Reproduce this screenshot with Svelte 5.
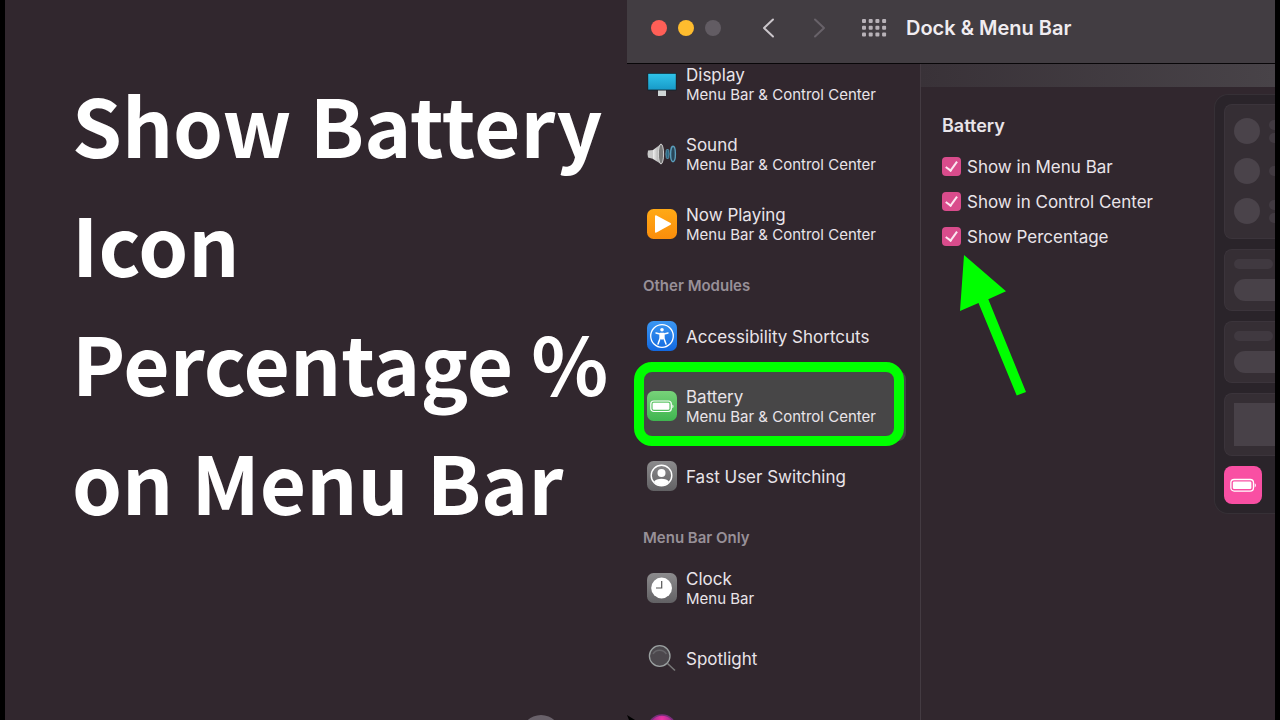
<script>
  const sections = [
    {
      items: [
        { icon: "display", name: "Display", where: "Menu Bar & Control Center" },
        { icon: "sound", name: "Sound", where: "Menu Bar & Control Center" },
        { icon: "play", name: "Now Playing", where: "Menu Bar & Control Center" },
      ],
    },
    {
      title: "Other Modules",
      items: [
        { icon: "access", name: "Accessibility Shortcuts" },
        { icon: "battery", name: "Battery", where: "Menu Bar & Control Center" },
        { icon: "user", name: "Fast User Switching" },
      ],
    },
    {
      title: "Menu Bar Only",
      items: [
        { icon: "clock", name: "Clock", where: "Menu Bar" },
        { icon: "spotlight", name: "Spotlight" },
        { icon: "siri", name: "" },
      ],
    },
  ];

  let selected = $state("battery");
  let options = $state([
    { label: "Show in Menu Bar", on: true },
    { label: "Show in Control Center", on: true },
    { label: "Show Percentage", on: true },
  ]);
</script>

{#snippet cell()}
  <rect x="6" y="10" width="20.5" height="10.5" rx="3" fill="none" stroke="#fff" stroke-width="1.2" />
  <rect x="7.8" y="11.8" width="16.8" height="6.9" rx="1.2" fill="#fff" />
  <path d="M27.6 13.4v3.8c1.5-.6 1.5-3.2 0-3.8z" fill="#fff" />
{/snippet}

{#snippet glyph(kind)}
  <svg class="icon" viewBox="0 0 30 30" aria-hidden="true">
    {#if kind === "display"}
      <rect x="0.5" y="4" width="29" height="17.5" rx="0.8" fill="#10242d" />
      <rect x="1.2" y="4.8" width="27.6" height="15.8" fill="url(#screen)" />
      <rect x="11" y="21.5" width="8" height="5.5" fill="#cfd6d6" />
    {:else if kind === "sound"}
      <path d="M1 11.5 6.5 11v9L1 18.5Q0 15 1 11.5z" fill="#c9c9c9" />
      <path d="M6 11 14 5v20l-8-5z" fill="url(#cone)" />
      <ellipse cx="14" cy="15" rx="2.6" ry="10" fill="#777" stroke="#ddd" stroke-width="0.9" />
      <ellipse cx="20.5" cy="15" rx="1.6" ry="5" fill="#286581" stroke="#5a91a8" />
      <ellipse cx="26" cy="15" rx="2.4" ry="7.7" fill="#294658" stroke="#5b9fbd" stroke-width="1.4" />
    {:else if kind === "play"}
      <rect width="30" height="30" rx="6.5" fill="url(#orange)" />
      <path d="M8 7.3c0-1 .7-1.3 1.5-.9l14 7.6c.8.5.8 1.2 0 1.7l-14 7.9c-.8.4-1.5 0-1.5-.9z" fill="#fff" />
    {:else if kind === "access"}
      <rect width="30" height="30" rx="6.5" fill="url(#blue)" />
      <circle cx="15" cy="15" r="11.3" fill="none" stroke="#fff" stroke-width="1.3" />
      <circle cx="15" cy="8.8" r="1.8" fill="#fff" />
      <path d="M9 11.9l4.2 1.1v4.1L11 23M21 11.9l-4.2 1.1v4.1L19 23" fill="none" stroke="#fff" stroke-width="1.5" stroke-linecap="round" />
      <path d="M12.7 11.8h4.6v5.7L15 18.8l-2.3-1.3z" fill="#fff" />
    {:else if kind === "battery"}
      <rect width="30" height="30" rx="6.5" fill="url(#green)" />
      <g transform="translate(-2.200 0)">{@render cell()}</g>
    {:else if kind === "user"}
      <rect width="30" height="30" rx="6.5" fill="url(#gray)" />
      <circle cx="14.5" cy="14.5" r="10.3" fill="none" stroke="#fff" stroke-width="1.4" />
      <circle cx="14.5" cy="11.9" r="4" fill="#fff" />
      <path d="M7 20.7c1.8-4 13.2-4 15 0-3.6 4.8-11.4 4.8-15 0z" fill="#fff" />
    {:else if kind === "clock"}
      <rect width="30" height="30" rx="6.5" fill="url(#gray)" />
      <circle cx="14.6" cy="15" r="10.4" fill="#fff" />
      <path d="M14.7 8v7H9" fill="none" stroke="#555" stroke-width="1.2" />
    {:else if kind === "spotlight"}
      <path d="M20.5 20.5l7.500 7" stroke="#777" stroke-width="1.6" />
      <circle cx="12.7" cy="13" r="10.3" fill="#4c484d" stroke="#9ba1a1" stroke-width="1.3" />
      <path d="M6 11c3-5 10-5 13.4 0" fill="none" stroke="#666569" stroke-width="1.4" />
    {:else}
      <circle cx="15" cy="16" r="14" fill="url(#orb)" stroke="#77307b" stroke-width="1.5" />
    {/if}
  </svg>
{/snippet}

<svg class="defs" width="0" height="0" aria-hidden="true">
  <defs>
    <linearGradient id="screen" x2="0" y2="1"><stop stop-color="#2fc3ea" /><stop offset="1" stop-color="#189ac8" /></linearGradient>
    <linearGradient id="cone"><stop stop-color="#eee" /><stop offset="1" stop-color="#999" /></linearGradient>
    <linearGradient id="orange" x2="0" y2="1"><stop stop-color="#ffa915" /><stop offset="1" stop-color="#fb8d0b" /></linearGradient>
    <linearGradient id="blue" x2="0" y2="1"><stop stop-color="#3b97f2" /><stop offset="1" stop-color="#1268e0" /></linearGradient>
    <linearGradient id="green" x2="0" y2="1"><stop stop-color="#77d279" /><stop offset="1" stop-color="#3fb550" /></linearGradient>
    <linearGradient id="gray" x2="0" y2="1"><stop stop-color="#8c8b8d" /><stop offset="1" stop-color="#626164" /></linearGradient>
    <radialGradient id="orb" cy="0.15"><stop stop-color="#ee36a6" /><stop offset="1" stop-color="#872586" /></radialGradient>
  </defs>
</svg>

<main class="stage">
  <section class="hero">
    <h1>Show Battery Icon Percentage % on Menu Bar</h1>
    <span class="knob"></span>
    <svg class="cursor" width="8" height="5" viewBox="0 0 8 5" aria-hidden="true"><path d="M0 0l8 5H2z" /></svg>
  </section>

  <section class="window">
    <header class="toolbar">
      <div class="lights">
        <button class="red" aria-label="Close"></button>
        <button class="yellow" aria-label="Minimize"></button>
        <button aria-label="Zoom" disabled></button>
      </div>
      <div class="arrows">
        <button aria-label="Back">
          <svg width="14" height="20" viewBox="0 0 14 20"><path d="M12 1.5 3 10l9 8.5" /></svg>
        </button>
        <button aria-label="Forward" disabled>
          <svg width="14" height="20" viewBox="0 0 14 20"><path d="M2 1.5 11 10l-9 8.5" /></svg>
        </button>
      </div>
      <button class="all" aria-label="Show all">
        <svg width="26" height="18" viewBox="0 0 26 18">
          {#each [0, 1, 2] as row}
            {#each [0, 1, 2, 3] as col}
              <rect x={1 + col * 6.7} y={row * 6.7} width="4" height="4" rx="1" />
            {/each}
          {/each}
        </svg>
      </button>
      <h2>Dock &amp; Menu Bar</h2>
    </header>

    <div class="body">
      <nav class="sidebar">
        <div class="list">
          {#each sections as section}
            {#if section.title}
              <h3>{section.title}</h3>
            {/if}
            {#each section.items as item}
              <button
                class="row"
                class:selected={selected === item.icon}
                aria-label={item.name || "Siri"}
                onclick={() => (selected = item.icon)}>
                {@render glyph(item.icon)}
                <span class="text">
                  <span class="name">{item.name}</span>
                  {#if item.where}<span class="where">{item.where}</span>{/if}
                </span>
              </button>
            {/each}
          {/each}
        </div>
      </nav>

      <div class="pane">
        <div class="strip"></div>
        <div class="columns">
          <div class="settings">
            <h4>Battery</h4>
            {#each options as option}
              <label>
                <input type="checkbox" bind:checked={option.on} />
                {option.label}
              </label>
            {/each}
            <svg class="pointer" width="68" height="143" viewBox="0 0 68 143" aria-hidden="true">
              <path d="M5 1 1 57l18.500-8L57.700 141.500 67 138 29.300 45.200 47 37.300z" fill="#0f0" />
            </svg>
          </div>

          <div class="preview">
            <div class="card toggles">
              <i class="dot"></i><span><i></i><i></i></span>
              <i class="dot"></i><span><i></i></span>
              <i class="dot"></i><span><i></i><i></i></span>
            </div>
            <div class="card"><i class="label"></i><i class="slider"></i></div>
            <div class="card"><i class="label"></i><i class="slider"></i></div>
            <div class="card"><i class="art"></i></div>
            <div class="chip">
              <svg width="32" height="32" viewBox="2.500 0.500 29 29" aria-hidden="true">{@render cell()}</svg>
            </div>
          </div>
        </div>
      </div>
    </div>
  </section>
</main>

<style>
  :global(body) {
    background: #000;
  }

  * {
    box-sizing: border-box;
  }

  .defs {
    position: absolute;
  }

  .stage {
    display: grid;
    grid-template-columns: 622fr 648fr;
    height: 100vh;
    margin: 0 5px;
    overflow: hidden;
    background: #31272e;
    color: #e9e4e9;
    font-family: Inter, "Liberation Sans", sans-serif;
  }

  h1,
  h2,
  h3,
  h4 {
    margin: 0;
  }

  button {
    border: 0;
    padding: 0;
    background: none;
    color: inherit;
    font: inherit;
  }

  .hero {
    position: relative;
    padding: 64px 0 0 67px;
  }

  h1 {
    max-width: 554px;
    color: #fff;
    font-family: "Noto Sans CJK SC", "Noto Sans", sans-serif;
    font-size: 80px;
    font-weight: 700;
    line-height: 119px;
  }

  .knob {
    position: absolute;
    left: 516px;
    bottom: -35px;
    width: 40px;
    height: 40px;
    border-radius: 50%;
    background: #69616a;
  }

  .cursor {
    position: absolute;
    right: -8px;
    bottom: 0;
  }

  .window {
    display: flex;
    flex-direction: column;
    min-width: 0;
    min-height: 0;
  }

  .toolbar {
    display: flex;
    flex: none;
    align-items: center;
    height: 64px;
    padding: 0 24px 8px;
    border-bottom: 1px solid #080608;
    background: #423d42;
  }

  .lights {
    display: flex;
    gap: 11px;
  }

  .lights button {
    width: 16px;
    height: 16px;
    border-radius: 50%;
    background: #625c63;
  }

  .lights .red {
    background: #ff5f57;
  }

  .lights .yellow {
    background: #febc2e;
  }

  .arrows {
    display: flex;
    gap: 38px;
    margin-left: 40px;
  }

  .arrows svg,
  .all svg {
    display: block;
  }

  .arrows path {
    fill: none;
    stroke: #cbc6cb;
    stroke-width: 2;
    stroke-linecap: round;
    stroke-linejoin: round;
  }

  .arrows :disabled path {
    stroke: #686269;
  }

  .all {
    margin: 0 19px 0 34px;
  }

  .all svg {
    fill: #b8b2b8;
  }

  h2 {
    color: #f0ecf0;
    font-size: 20px;
    font-weight: 600;
    line-height: 24px;
  }

  .body {
    display: flex;
    flex: 1;
    min-height: 0;
  }

  .sidebar {
    flex: none;
    width: 294px;
    overflow: hidden;
    border-right: 1px solid #443b42;
  }

  /* the list is scrolled a little under the toolbar */
  .list {
    margin-top: -15px;
    padding: 0 14px 0 10px;
  }

  h3 {
    padding: 16px 6px 4px;
    color: #989098;
    font-size: 15px;
    font-weight: 600;
    line-height: 22px;
  }

  .row {
    position: relative;
    display: flex;
    align-items: center;
    gap: 9px;
    width: 100%;
    height: 70px;
    padding: 0 10px;
    border-radius: 8px;
    text-align: left;
  }

  .row.selected {
    background: #474647;
  }

  .row.selected::after {
    content: "";
    position: absolute;
    inset: -9px 2px -5px -3px;
    border: 10px solid #0f0;
    border-radius: 18px;
  }

  .icon {
    flex: none;
    width: 30px;
    height: 30px;
    overflow: visible;
  }

  .text {
    display: flex;
    flex-direction: column;
    padding-top: 2px;
    line-height: 20px;
    white-space: nowrap;
  }

  .name {
    font-size: 17px;
  }

  .where {
    font-size: 15px;
  }

  .pane {
    flex: 1;
    min-width: 0;
  }

  .strip {
    height: 23px;
    background: linear-gradient(to right, #393238, #484348);
  }

  .columns {
    display: flex;
    justify-content: space-between;
    padding-top: 7px;
  }

  .settings {
    position: relative;
    padding: 20px 0 0 21px;
  }

  h4 {
    margin-bottom: 11px;
    font-size: 18px;
    font-weight: 600;
    line-height: 24px;
  }

  label {
    display: flex;
    align-items: center;
    gap: 6px;
    height: 35px;
    font-size: 17px;
    white-space: nowrap;
  }

  input {
    position: relative;
    width: 19px;
    height: 19px;
    margin: 0;
    appearance: none;
    border-radius: 4px;
    background: #5a525a;
  }

  input:checked {
    background: #d94c8c;
  }

  input:checked::after {
    content: "";
    position: absolute;
    left: 6px;
    top: 2px;
    width: 5px;
    height: 10px;
    border: solid #fbe6f0;
    border-width: 0 2px 2px 0;
    transform: rotate(36deg);
  }

  .pointer {
    position: absolute;
    left: 38px;
    top: 160px;
  }

  .preview {
    display: flex;
    flex: none;
    flex-direction: column;
    gap: 10px;
    width: 61px;
    padding: 9px 0 9px 9px;
    overflow: hidden;
    border: 1px solid #363036;
    border-right: 0;
    border-radius: 14px 0 0 14px;
    background: #2a242a;
  }

  .card {
    display: flex;
    flex-direction: column;
    gap: 10px;
    padding: 9px 0 9px 9px;
    overflow: hidden;
    border: 1px solid #3b343b;
    border-right: 0;
    border-radius: 8px 0 0 8px;
    background: #352e34;
  }

  .toggles {
    display: grid;
    grid-template-columns: 26px 20px;
    gap: 14px 9px;
    align-items: center;
    padding: 13px 0 14px 9px;
  }

  .dot {
    height: 26px;
    border-radius: 50%;
    background: #4a434a;
  }

  .toggles span {
    display: grid;
    gap: 3px;
  }

  .toggles span i {
    height: 10px;
    border-radius: 5px;
    background: #423b42;
  }

  .label {
    width: 39px;
    height: 10px;
    border-radius: 5px;
    background: #403940;
  }

  .slider {
    height: 22px;
    border-radius: 11px 0 0 11px;
    background: #484148;
  }

  .art {
    height: 43px;
    background: #484148;
  }

  .chip {
    display: flex;
    align-items: center;
    justify-content: center;
    width: 38px;
    height: 38px;
    border-radius: 8px;
    background: #f94fa3;
  }
</style>
